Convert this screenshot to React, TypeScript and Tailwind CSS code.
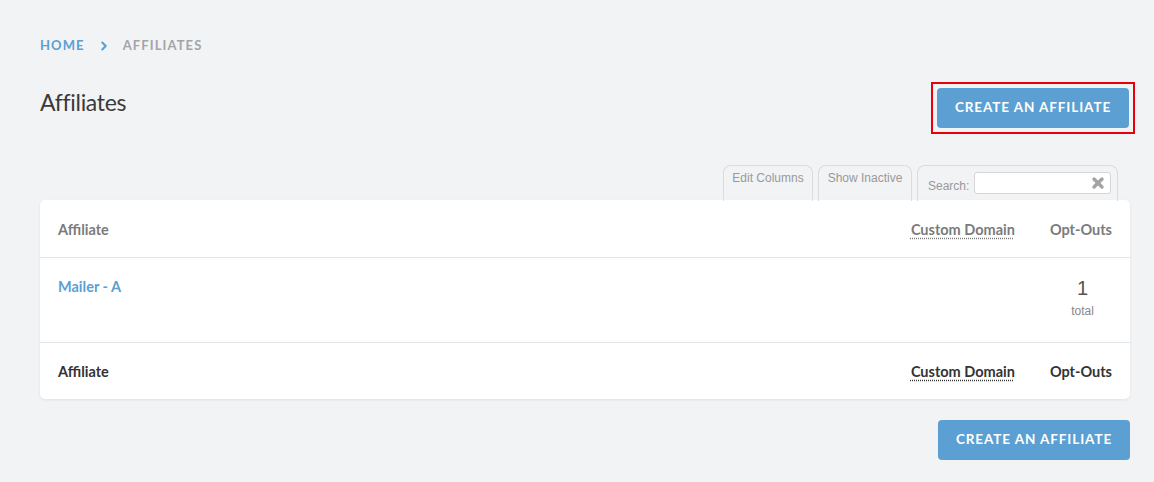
import { ChevronRight, X } from "lucide-react";

const CreateButton: React.FC<{ outlined?: boolean }> = ({ outlined }) => {
  const btn = (
    <button className="h-[40px] w-[192px] rounded-[4px] bg-[#5b9fd3] text-[13.5px] font-bold tracking-[0.9px] text-white">
      CREATE AN AFFILIATE
    </button>
  );
  if (!outlined) return btn;
  return <div className="border-2 border-[#e8000b] p-[4px]">{btn}</div>;
};

export default function App() {
  return (
    <div className="min-h-[482px] w-full bg-[#f2f3f5] pl-[40px] pr-[24px] pt-[36px] font-['Lato','Noto_Sans',sans-serif] text-[#333]">
      {/* breadcrumb */}
      <div className="flex items-center text-[13px] font-bold tracking-[1.1px]">
        <a href="#" className="text-[#5b9fd3]">HOME</a>
        <ChevronRight className="mx-[12px] h-[14px] w-[14px] text-[#5b9fd3]" strokeWidth={3.5} />
        <span className="text-[#a2a4a7]">AFFILIATES</span>
      </div>

      {/* header */}
      <div className="mt-[26px] flex items-start justify-between">
        <h1 className="mt-[3px] text-[23px] font-normal tracking-[-0.3px] text-[#3a3a3a]">Affiliates</h1>
        <div className="-mr-[5px]">
          <CreateButton outlined />
        </div>
      </div>

      {/* table tools */}
      <div className="mt-[31px] flex justify-end gap-[5px] pr-[12px] font-['Liberation_Sans',Arial,sans-serif] text-[12px] text-[#999]">
        <div className="h-[36px] w-[90px] rounded-t-[8px] border border-b-0 border-[#dcdcdc] pt-[3px] text-center">Edit Columns</div>
        <div className="h-[36px] w-[94px] rounded-t-[8px] border border-b-0 border-[#dcdcdc] pt-[3px] text-center">Show Inactive</div>
        <div className="flex h-[36px] w-[201px] items-start rounded-t-[8px] border border-b-0 border-[#dcdcdc] pl-[10px] pt-[6px]">
          <span className="mt-[5px]">Search:</span>
          <div className="ml-[5px] flex h-[22px] w-[137px] items-center justify-end rounded-[3px] border border-[#d6d6d6] bg-white pr-[4px]">
            <X className="h-[16px] w-[16px] text-[#a3a3a3]" strokeWidth={5} />
          </div>
        </div>
      </div>

      {/* card */}
      <div className="-mt-px overflow-hidden rounded-[5px] bg-white shadow-[0_1px_3px_rgba(0,0,0,0.08)]">
        <div className="flex h-[58px] items-center border-b border-[#e3e4e6] px-[18px] pt-[3px] text-[14.5px] font-bold text-[#7b7b7b]">
          <span className="flex-1">Affiliate</span>
          <span className="underline decoration-dotted underline-offset-[3px]">Custom Domain</span>
          <span className="ml-[35px]">Opt-Outs</span>
        </div>
        <div className="flex h-[85px] items-start border-b border-[#e3e4e6] px-[18px] pt-[18px]">
          <a href="#" className="flex-1 text-[14.5px] font-bold text-[#5b9fd3]">Mailer - A</a>
          <div className="mt-[1px] flex w-[59px] flex-col items-center font-['Liberation_Sans',Arial,sans-serif] text-[#555]">
            <span className="text-[20px] leading-[22px]">1</span>
            <span className="mt-[3px] text-[12px] text-[#888]">total</span>
          </div>
        </div>
        <div className="flex h-[56px] items-center px-[18px] pt-[2px] text-[14.5px] font-bold text-[#333]">
          <span className="flex-1">Affiliate</span>
          <span className="underline decoration-dotted underline-offset-[3px]">Custom Domain</span>
          <span className="ml-[35px]">Opt-Outs</span>
        </div>
      </div>

      {/* bottom button */}
      <div className="mt-[21px] flex justify-end pb-[22px]">
        <CreateButton />
      </div>
    </div>
  );
}
